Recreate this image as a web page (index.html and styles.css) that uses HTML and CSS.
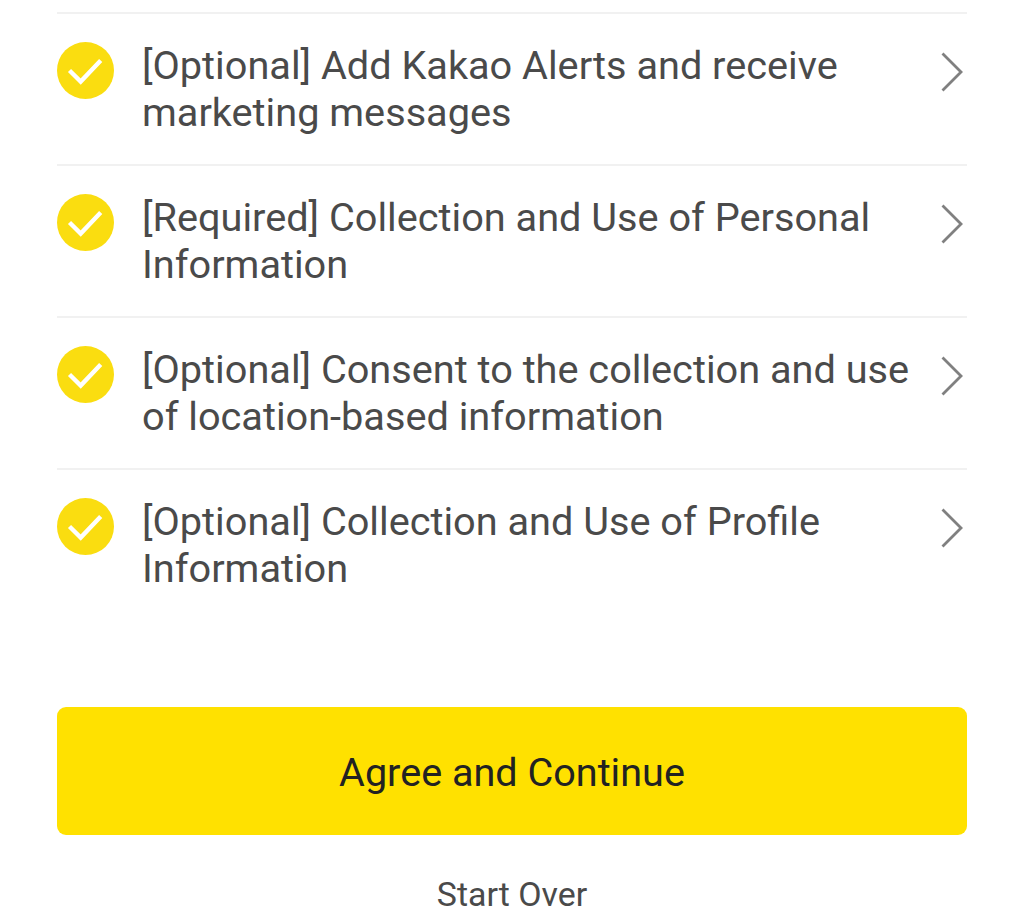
FILE: index.html
```html
<!DOCTYPE html>
<html lang="en">
<head>
<meta charset="utf-8">
<title>Agree</title>
<link rel="stylesheet" href="styles.css">
</head>
<body>
<main class="page">
  <ul class="list">
    <li class="item">
      <svg class="check" viewBox="0 0 57 57"><circle cx="28.5" cy="28.5" r="28.5" fill="#fadd10"/><path d="M12.5 28.5l11.2 11 20-21" fill="none" stroke="#fff" stroke-width="4.4"/></svg>
      <span class="label">[Optional] Add Kakao Alerts and receive marketing messages</span>
      <svg class="chev" viewBox="0 0 22 40"><path d="M1.5 1.5L20 20 1.5 38.5" fill="none" stroke="#808080" stroke-width="2.8"/></svg>
    </li>
    <li class="item">
      <svg class="check" viewBox="0 0 57 57"><circle cx="28.5" cy="28.5" r="28.5" fill="#fadd10"/><path d="M12.5 28.5l11.2 11 20-21" fill="none" stroke="#fff" stroke-width="4.4"/></svg>
      <span class="label">[Required] Collection and Use of Personal Information</span>
      <svg class="chev" viewBox="0 0 22 40"><path d="M1.5 1.5L20 20 1.5 38.5" fill="none" stroke="#808080" stroke-width="2.8"/></svg>
    </li>
    <li class="item">
      <svg class="check" viewBox="0 0 57 57"><circle cx="28.5" cy="28.5" r="28.5" fill="#fadd10"/><path d="M12.5 28.5l11.2 11 20-21" fill="none" stroke="#fff" stroke-width="4.4"/></svg>
      <span class="label">[Optional] Consent to the collection and use of location-based information</span>
      <svg class="chev" viewBox="0 0 22 40"><path d="M1.5 1.5L20 20 1.5 38.5" fill="none" stroke="#808080" stroke-width="2.8"/></svg>
    </li>
    <li class="item">
      <svg class="check" viewBox="0 0 57 57"><circle cx="28.5" cy="28.5" r="28.5" fill="#fadd10"/><path d="M12.5 28.5l11.2 11 20-21" fill="none" stroke="#fff" stroke-width="4.4"/></svg>
      <span class="label">[Optional] Collection and Use of Profile Information</span>
      <svg class="chev" viewBox="0 0 22 40"><path d="M1.5 1.5L20 20 1.5 38.5" fill="none" stroke="#808080" stroke-width="2.8"/></svg>
    </li>
  </ul>
  <button class="agree" type="button">Agree and Continue</button>
  <a class="over">Start Over</a>
</main>
</body>
</html>
```
FILE: styles.css
```css
* { box-sizing: border-box; }
html, body { margin: 0; padding: 0; background: #fff; }
body { height: 921px; overflow: hidden; font-family: Roboto, "Noto Sans", sans-serif; }
.page { padding: 12px 57px 0; display: flex; flex-direction: column; }
.list { list-style: none; margin: 0; padding: 0; }
.item {
  display: flex;
  align-items: flex-start;
  height: 152px;
  padding-top: 28px;
  border-top: 2px solid #f1f1f1;
}
.check { width: 57px; height: 57px; flex: none; margin-right: 28px; }
.label {
  flex: 1;
  min-width: 0;
  margin-top: 1px;
  padding-right: 20px;
  font-size: 39.7px;
  line-height: 46.5px;
  color: #4a4a4a;
}
.chev { width: 22px; height: 40px; flex: none; margin: 10px 4px 0 0; }
.agree {
  margin-top: 87px;
  height: 128px;
  padding-top: 4px;
  border: 0;
  border-radius: 9px;
  background: #ffe100;
  color: #222;
  font: 400 39.6px Roboto, sans-serif;
}
.over {
  margin-top: 40px;
  text-align: center;
  font-size: 33.9px;
  color: #4a4a4a;
}
```
